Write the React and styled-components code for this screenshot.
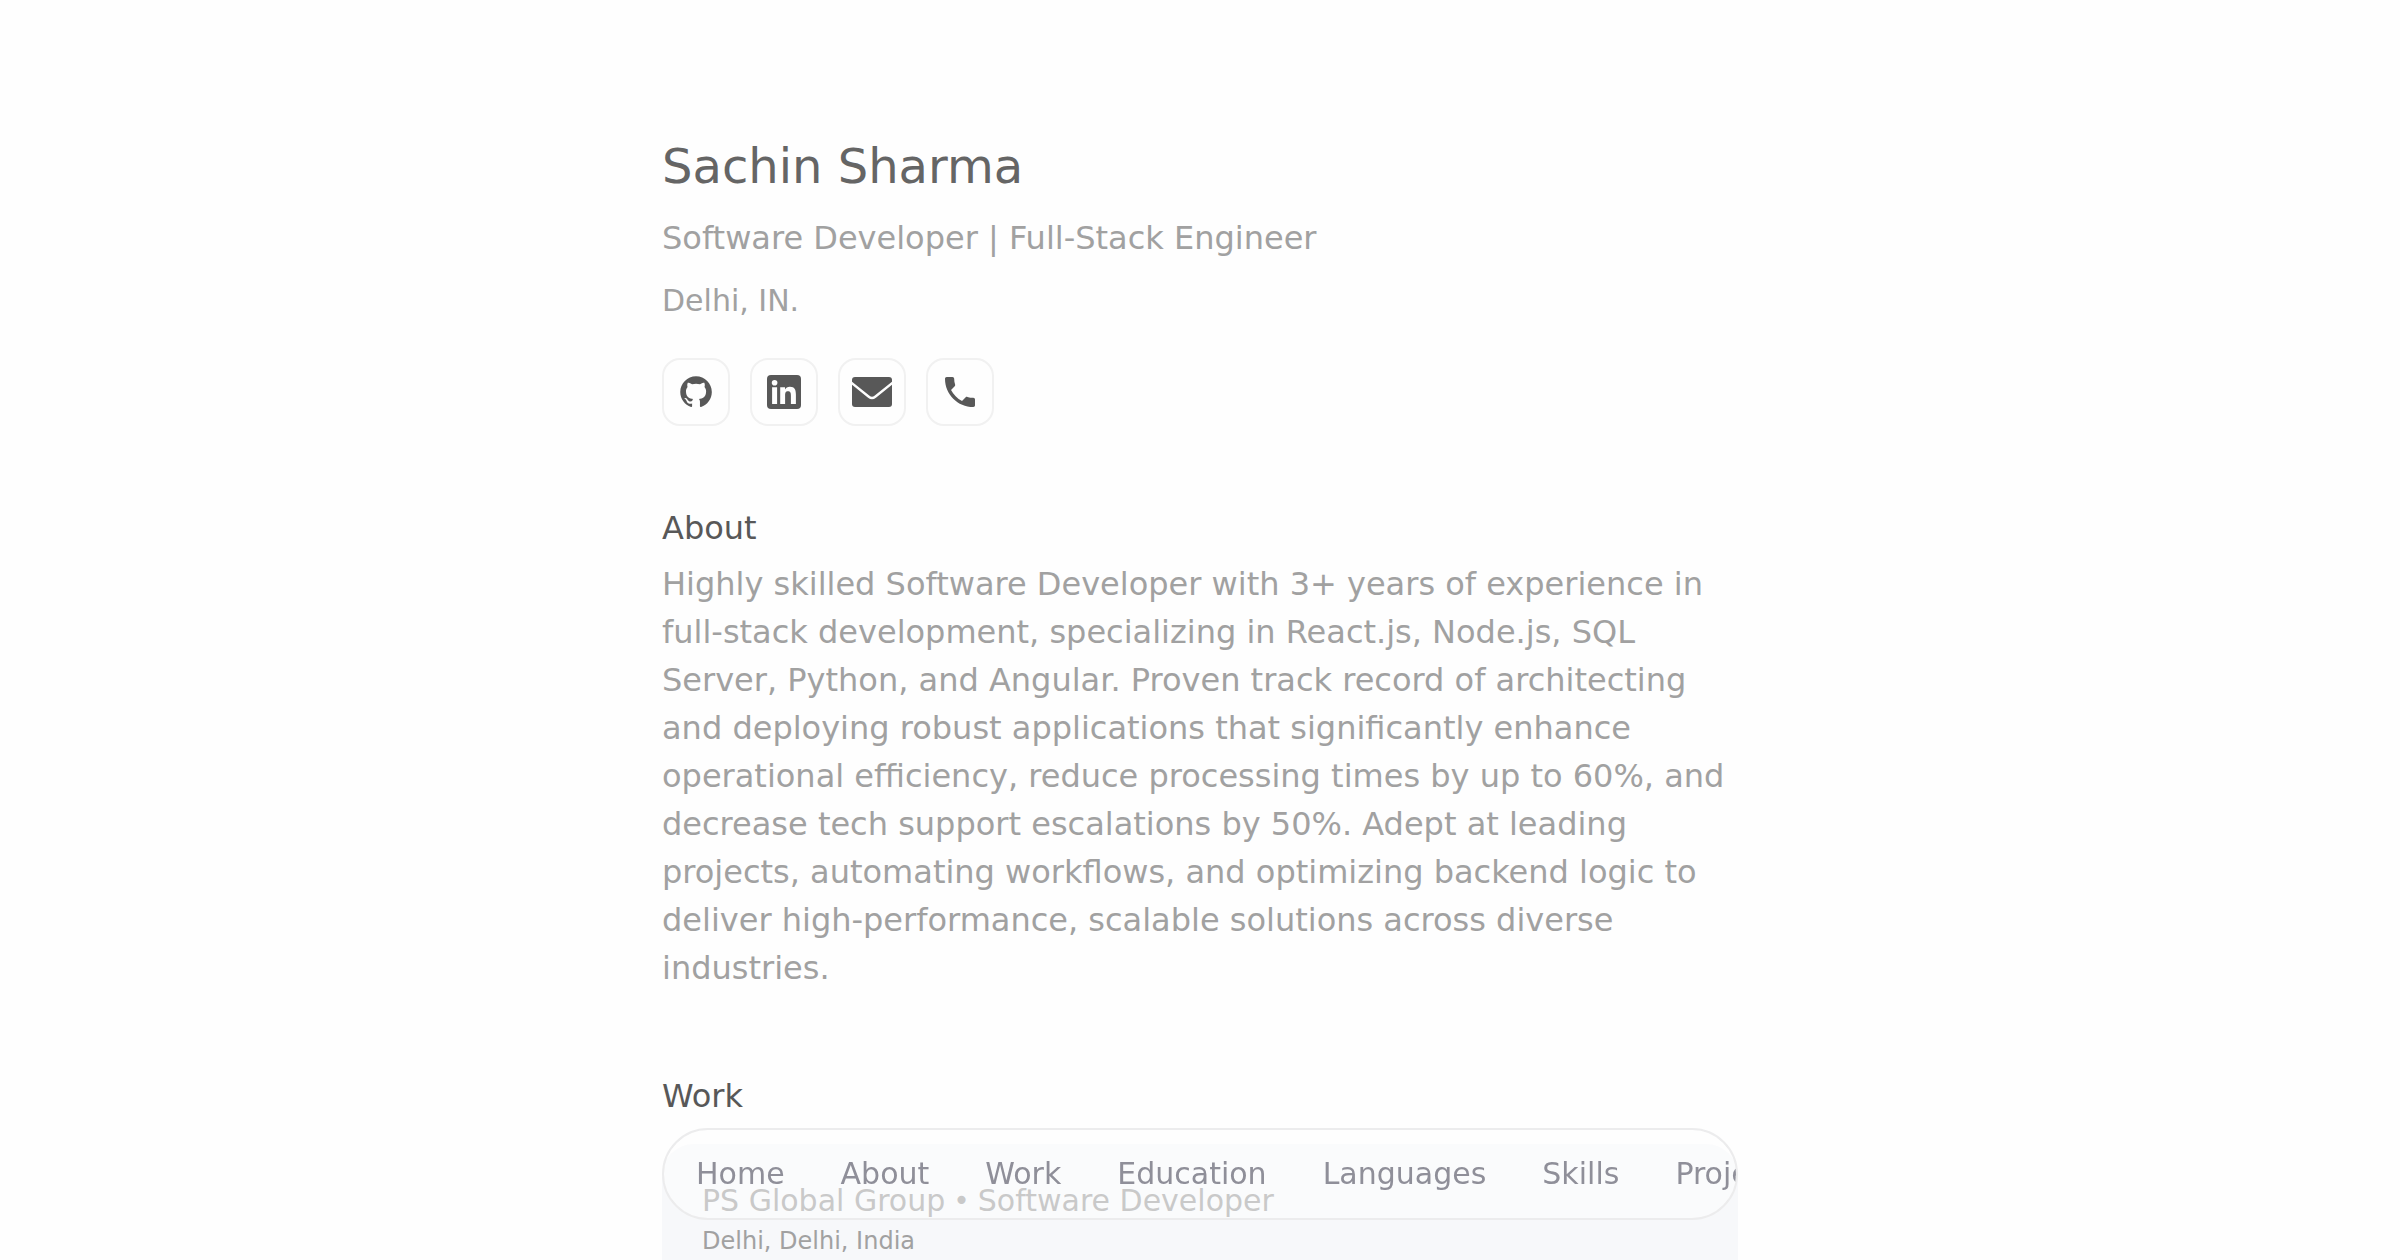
import React from "react";
import styled, { createGlobalStyle } from "styled-components";
import { BiLogoGithub } from "react-icons/bi";
import { MdPhone } from "react-icons/md";

const GlobalStyle = createGlobalStyle`
  * { box-sizing: border-box; margin: 0; }
  body {
    background: #fefefe;
    font-family: "DejaVu Sans", sans-serif;
    font-size: 32px;
    line-height: 48px;
    color: #a1a1a1;
    overflow: hidden;
  }
`;

const Page = styled.main`
  width: 100%;
  max-width: 1076px;
  height: 100vh;
  margin: 0 auto;
  padding-top: 132px;
  overflow: hidden;
`;

const Header = styled.header`
  margin-bottom: 78px;
`;

const Name = styled.h1`
  font-size: 48px;
  line-height: 68px;
  font-weight: 400;
  color: #656565;
`;

const Role = styled.p`
  margin-top: 14px;
`;

const Place = styled.p`
  margin-top: 16px;
  font-size: 30px;
  line-height: 46px;
`;

const Links = styled.div`
  display: flex;
  gap: 20px;
  margin-top: 34px;
`;

const IconLink = styled.a`
  display: flex;
  align-items: center;
  justify-content: center;
  width: 68px;
  height: 68px;
  border: 2px solid #f1f1f1;
  border-radius: 18px;
  color: #585858;
`;

const Section = styled.section`
  margin-bottom: 80px;
`;

const Title = styled.h2`
  font-size: 32px;
  line-height: 48px;
  font-weight: 400;
  color: #585858;
  margin-bottom: 8px;
`;

const Card = styled.article`
  margin-top: 24px;
  padding: 35px 40px;
  background: #f7f8fa;
  border-radius: 32px;
`;

const Job = styled.h3`
  display: flex;
  align-items: center;
  gap: 8px;
  font-size: 30px;
  line-height: 44px;
  font-weight: 400;
  color: #949494;
`;

const Dot = styled.span`
  font-size: 28px;
`;

const JobPlace = styled.p`
  font-size: 24px;
  line-height: 36px;
`;

const Nav = styled.nav`
  position: fixed;
  bottom: 40px;
  left: 50%;
  transform: translateX(-50%);
  display: flex;
  align-items: center;
  gap: 56px;
  width: 100%;
  max-width: 1076px;
  height: 92px;
  padding: 0 32px;
  border: 2px solid #ececed;
  border-radius: 46px;
  background: rgba(254, 254, 254, 0.5);
  overflow: hidden;
`;

const NavLink = styled.a`
  flex: none;
  font-size: 30px;
  line-height: 44px;
  color: #8f8f99;
  text-decoration: none;
`;

const LinkedInIcon = ({ size }) => (
  <svg width={size} height={size} viewBox="0 0 34 34" fill="none">
    <rect width="34" height="34" rx="4" fill="currentColor" />
    <g fill="#fefefe">
      <circle cx="7.6" cy="7.7" r="2.8" />
      <path d="M5.1 12.2h5V29h-5zM13.2 12.2H18v2.3c.8-1.5 2.500-2.700 4.900-2.700 5 0 6 3.200 6 7.800V29h-5v-8.200c0-2 0-4.500-2.800-4.500s-3 2.100-3 4.300V29h-4.900z" />
    </g>
  </svg>
);

const MailIcon = ({ size }) => (
  <svg width={size} viewBox="0 0 40 30" fill="none">
    <rect width="40" height="30" rx="3" fill="currentColor" />
    <path d="M-1 5.500 16.800 19.700q3.200 2.600 6.400 0L41 5.500" stroke="#fefefe" strokeWidth="2.400" />
  </svg>
);

const links = [
  ["GitHub", BiLogoGithub, 38],
  ["LinkedIn", LinkedInIcon, 34],
  ["Email", MailIcon, 40],
  ["Phone", MdPhone, 40],
];

const pages = ["Home", "About", "Work", "Education", "Languages", "Skills", "Projects"];

export default function App() {
  return (
    <>
      <GlobalStyle />
      <Page>
        <Header id="home">
          <Name>Sachin Sharma</Name>
          <Role>Software Developer | Full-Stack Engineer</Role>
          <Place>Delhi, IN.</Place>
          <Links>
            {links.map(([label, Icon, size]) => (
              <IconLink key={label} href="#home" aria-label={label}>
                <Icon size={size} />
              </IconLink>
            ))}
          </Links>
        </Header>
        <Section id="about">
          <Title>About</Title>
          <p>
            Highly skilled Software Developer with 3+ years of experience in
            full-stack development, specializing in React.js, Node.js, SQL
            Server, Python, and Angular. Proven track record of architecting and
            deploying robust applications that significantly enhance operational
            efficiency, reduce processing times by up to 60%, and decrease tech
            support escalations by 50%. Adept at leading projects, automating
            workflows, and optimizing backend logic to deliver high-performance,
            scalable solutions across diverse industries.
          </p>
        </Section>
        <Section id="work">
          <Title>Work</Title>
          <Card>
            <Job>
              PS Global Group <Dot>•</Dot> Software Developer
            </Job>
            <JobPlace>Delhi, Delhi, India</JobPlace>
          </Card>
        </Section>
      </Page>
      <Nav aria-label="Sections">
        {pages.map((page) => (
          <NavLink key={page} href={`#${page.toLowerCase()}`}>
            {page}
          </NavLink>
        ))}
      </Nav>
    </>
  );
}
